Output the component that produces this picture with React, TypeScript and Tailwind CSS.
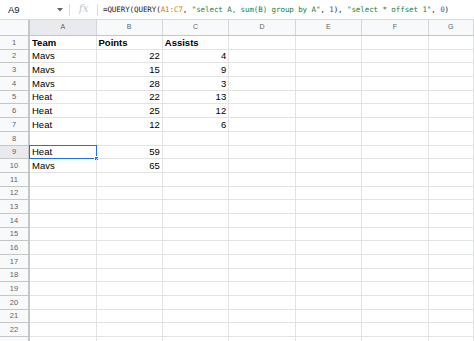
import React from "react";

const cols = ["A", "B", "C", "D", "E", "F", "G"];

type Cell = { v: string; bold?: boolean; right?: boolean };
const data: Record<number, Cell[]> = {
  1: [{ v: "Team", bold: true }, { v: "Points", bold: true }, { v: "Assists", bold: true }],
  2: [{ v: "Mavs" }, { v: "22", right: true }, { v: "4", right: true }],
  3: [{ v: "Mavs" }, { v: "15", right: true }, { v: "9", right: true }],
  4: [{ v: "Mavs" }, { v: "28", right: true }, { v: "3", right: true }],
  5: [{ v: "Heat" }, { v: "22", right: true }, { v: "13", right: true }],
  6: [{ v: "Heat" }, { v: "25", right: true }, { v: "12", right: true }],
  7: [{ v: "Heat" }, { v: "12", right: true }, { v: "6", right: true }],
  9: [{ v: "Heat" }, { v: "59", right: true }],
  10: [{ v: "Mavs" }, { v: "65", right: true }],
};

const gridCols = "grid grid-cols-[30px_66.5px_66.3px_66.4px_66.5px_66.4px_66.5px_1fr]";

export default function App() {
  const rows = Array.from({ length: 23 }, (_, i) => i + 1);
  return (
    <div className="w-[474px] h-[341px] overflow-hidden bg-white font-['Liberation_Sans',Arial,sans-serif]">
      {/* formula bar */}
      <div className="h-[20px] flex items-center border-b border-[#d7d9dc] text-[9.5px] text-[#202124]">
        <div className="w-[69px] pl-[8px] pr-[6px] flex items-center justify-between">
          <span className="pt-[1px]">A9</span>
          <svg width="6" height="4" viewBox="0 0 6 4" className="mt-[1px]">
            <path d="M0 0 L6 0 L3 3.5 Z" fill="#5f6368" />
          </svg>
        </div>
        <div className="w-px h-[12px] bg-[#dadce0]" />
        <div className="w-[27px] flex justify-center">
          <span className="font-['DejaVu_Serif',serif] italic text-[11px] text-[#c4c7c5] tracking-[-0.5px]">fx</span>
        </div>
        <div className="w-px h-[12px] bg-[#dadce0]" />
        <div className="pl-[5px] whitespace-nowrap font-['DejaVu_Sans_Mono','Liberation_Mono',monospace] text-[7.5px] tracking-[-0.08px] text-[#202124] pt-[1px]">
          <span>=QUERY(QUERY(</span>
          <span className="text-[#e37400]">A1:C7</span>
          <span>, </span>
          <span className="text-[#188038]">"select A, sum(B) group by A"</span>
          <span>, </span>
          <span className="text-[#3d4a8a]">1</span>
          <span>), </span>
          <span className="text-[#188038]">"select * offset 1"</span>
          <span>, </span>
          <span className="text-[#1967d2]">0</span>
          <span>)</span>
        </div>
      </div>

      {/* column headers */}
      <div className={`${gridCols} h-[16px] bg-[#f8f9fa] border-b border-[#c4c7c5]`}>
        <div className="bg-[#f8f9fa] border-r-[2px] border-[#c4c7c5]" />
        {cols.map((c) => (
          <div
            key={c}
            className={`flex items-center justify-center border-r border-[#d3d5d8] text-[7px] text-[#5f6368] ${c === "A" ? "bg-[#e8eaed]" : ""}`}
          >
            {c}
          </div>
        ))}
      </div>

      {/* rows */}
      {rows.map((r) => {
        const cells = data[r] || [];
        return (
          <div key={r} className={`${gridCols} h-[13.7px]`}>
            <div
              className={`flex items-center justify-center text-[7.5px] text-[#5f6368] border-r-[2px] border-b border-[#c4c7c5] ${r === 9 ? "bg-[#e8eaed]" : "bg-[#f8f9fa]"}`}
            >
              {r <= 22 ? r : ""}
            </div>
            {cols.map((c, ci) => {
              const cell = cells[ci];
              const selected = r === 9 && c === "A";
              return (
                <div
                  key={c}
                  className={`relative flex items-center border-r border-b border-[#e2e3e3] text-[9.5px] text-black leading-none px-[2px] ${cell?.right ? "justify-end" : ""} ${cell?.bold ? "font-bold" : ""}`}
                >
                  {cell?.v}
                  {selected && (
                    <>
                      <div className="absolute left-[-1px] top-[-1px] right-[-1px] bottom-[-1px] border-[1.5px] border-[#1a73e8] pointer-events-none" />
                      <div className="absolute right-[-3px] bottom-[-3px] w-[5px] h-[5px] bg-[#1a73e8] border border-white" />
                    </>
                  )}
                </div>
              );
            })}
          </div>
        );
      })}
    </div>
  );
}
